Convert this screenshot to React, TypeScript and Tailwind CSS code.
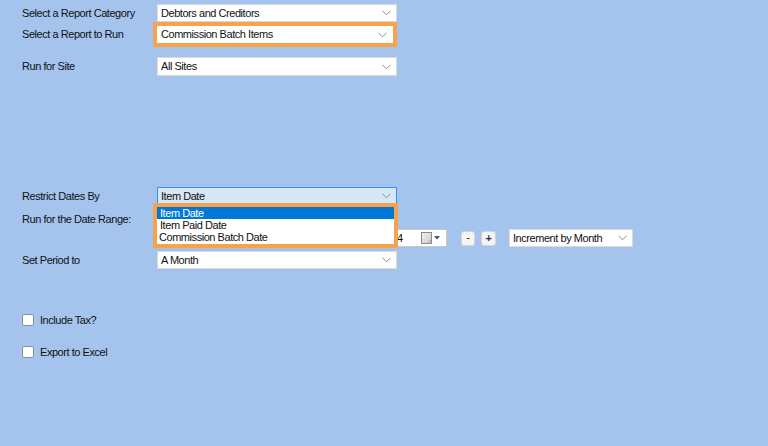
import React from "react";

const Chevron = () => (
  <svg width="9" height="6" viewBox="0 0 9 6" className="shrink-0">
    <path d="M0.5 0.8 L4.5 4.8 L8.5 0.8" fill="none" stroke="#8a8a8a" strokeWidth="1" />
  </svg>
);

function Select({
  text,
  className = "w-[240px] h-[18px]",
  tone = "bg-white border-[#dadada]",
}: {
  text: string;
  className?: string;
  tone?: string;
}) {
  return (
    <div className={`flex items-center justify-between border pl-[3px] pr-[5px] ${tone} ${className}`}>
      <span className="leading-none whitespace-nowrap">{text}</span>
      <Chevron />
    </div>
  );
}

function Row({ label, children, className = "" }: { label?: string; children?: React.ReactNode; className?: string }) {
  return (
    <div className={`flex items-center pl-[22px] ${className}`}>
      <div className="w-[135px] shrink-0 leading-none whitespace-nowrap">{label}</div>
      {children}
    </div>
  );
}

const CalendarIcon = () => (
  <svg width="19" height="12" viewBox="0 0 19 12">
    <defs>
      <linearGradient id="calg" x1="0" y1="0" x2="1" y2="1">
        <stop offset="0" stopColor="#f4f4f4" />
        <stop offset="1" stopColor="#c9c9c9" />
      </linearGradient>
    </defs>
    <rect x="0.5" y="0.5" width="10" height="11" fill="url(#calg)" stroke="#8a8a8a" />
    <path d="M10.5 7.5 L7 11.5" stroke="#9a9a9a" strokeWidth="1" fill="none" />
    <path d="M13 4 L19 4 L16 7.5 Z" fill="#3b5584" />
  </svg>
);

function Check({ label }: { label: string }) {
  return (
    <div className="flex items-center pl-[22px]">
      <div className="w-[12px] h-[12px] rounded-[2px] border border-[#8f8f8f] bg-white" />
      <span className="ml-[6px] leading-none">{label}</span>
    </div>
  );
}

export default function App() {
  return (
    <div
      className="relative w-[768px] h-[446px] overflow-hidden bg-[#a4c3ed] text-[11px] tracking-[-0.45px] text-[#111]"
      style={{ fontFamily: '"Liberation Sans", Arial, sans-serif' }}
    >
      <div className="flex flex-col pt-[4px]">
        <Row label="Select a Report Category" className="h-[18px]">
          <Select text="Debtors and Creditors" />
        </Row>
        <Row label="Select a Report to Run" className="h-[25px]">
          <div className="ml-[-4px] border-4 border-[#f9a24c]">
            <Select text="Commission Batch Items" className="w-[236px] h-[17px]" tone="bg-white border-white" />
          </div>
        </Row>
        <Row label="Run for Site" className="h-[19px] mt-[10px]">
          <Select text="All Sites" className="w-[240px] h-[19px]" />
        </Row>

        <Row label="Restrict Dates By" className="h-[18px] mt-[111px]">
          <Select
            text="Item Date"
            className="w-[240px] h-[18px]"
            tone="bg-[#d6e7f8] border-[#3d8ee0]"
          />
        </Row>
        <Row label="Run for the Date Range:" className="h-[14px] mt-[7px]" />
        <div className="flex items-center h-[18px] mt-[3px] pl-[157px]">
          <div className="w-[184px] h-[18px] bg-white border border-[#c8c8c8]" />
          <div className="ml-[6px] w-[100px] h-[18px] flex items-center justify-between bg-white border border-[#c8c8c8] pl-[4px] pr-[6px]">
            <span className="leading-none">30/04/2024</span>
            <CalendarIcon />
          </div>
          <div className="ml-[14px] w-[14px] h-[15px] flex items-center justify-center rounded-[3px] bg-[#f4f4f4] border border-[#d4d4d4] leading-none text-[10px]">
            -
          </div>
          <div className="ml-[6px] w-[15px] h-[15px] flex items-center justify-center rounded-[3px] bg-[#f4f4f4] border border-[#d4d4d4] leading-none text-[11px] font-bold text-[#334]">
            +
          </div>
          <Select text="Increment by Month" className="ml-[13px] w-[124px] h-[18px]" />
        </div>
        <Row label="Set Period to" className="h-[18px] mt-[4px]">
          <Select text="A Month" />
        </Row>

        <div className="mt-[45px]">
          <Check label="Include Tax?" />
        </div>
        <div className="mt-[20px]">
          <Check label="Export to Excel" />
        </div>
      </div>

      <div className="absolute left-[153px] top-[203px] w-[245px] border-4 border-[#f9a24c] bg-white">
        <div className="h-[12px] bg-[#0078d7] text-white pl-[3px] flex items-center leading-none">Item Date</div>
        <div className="h-[12px] pl-[3px] flex items-center leading-none">Item Paid Date</div>
        <div className="h-[13px] pl-[2px] flex items-center leading-none">Commission Batch Date</div>
      </div>
    </div>
  );
}
